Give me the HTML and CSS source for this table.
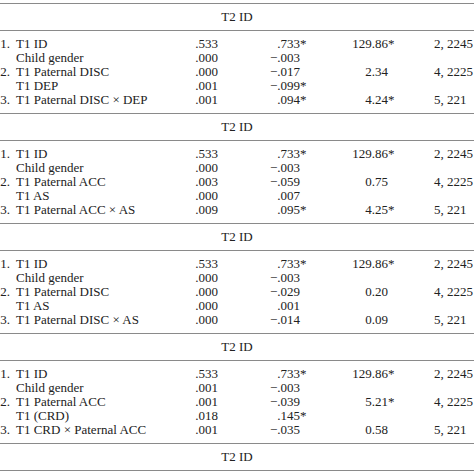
FILE: index.html
```html
<!DOCTYPE html>
<html>
<head>
<meta charset="utf-8">
<link rel="stylesheet" href="styles.css">
</head>
<body>
<div class="table">
  <section class="block">
    <div class="head">T2 ID</div>
    <div class="body">
      <div class="row"><span class="n">1.</span><span class="lab">T1 ID</span><span class="c2">.533</span><span class="c3">.733<i>*</i></span><span class="c4">129.86<i>*</i></span><span class="c5">2, 2245</span></div>
      <div class="row"><span class="n"></span><span class="lab">Child gender</span><span class="c2">.000</span><span class="c3">−.003<i></i></span><span class="c4"></span><span class="c5"></span></div>
      <div class="row"><span class="n">2.</span><span class="lab">T1 Paternal DISC</span><span class="c2">.000</span><span class="c3">−.017<i></i></span><span class="c4">2.34<i></i></span><span class="c5">4, 2225</span></div>
      <div class="row"><span class="n"></span><span class="lab">T1 DEP</span><span class="c2">.001</span><span class="c3">−.099<i>*</i></span><span class="c4"></span><span class="c5"></span></div>
      <div class="row"><span class="n">3.</span><span class="lab">T1 Paternal DISC × DEP</span><span class="c2">.001</span><span class="c3">.094<i>*</i></span><span class="c4">4.24<i>*</i></span><span class="c5">5, 221</span></div>
    </div>
  </section>
  <section class="block">
    <div class="head">T2 ID</div>
    <div class="body">
      <div class="row"><span class="n">1.</span><span class="lab">T1 ID</span><span class="c2">.533</span><span class="c3">.733<i>*</i></span><span class="c4">129.86<i>*</i></span><span class="c5">2, 2245</span></div>
      <div class="row"><span class="n"></span><span class="lab">Child gender</span><span class="c2">.000</span><span class="c3">−.003<i></i></span><span class="c4"></span><span class="c5"></span></div>
      <div class="row"><span class="n">2.</span><span class="lab">T1 Paternal ACC</span><span class="c2">.003</span><span class="c3">−.059<i></i></span><span class="c4">0.75<i></i></span><span class="c5">4, 2225</span></div>
      <div class="row"><span class="n"></span><span class="lab">T1 AS</span><span class="c2">.000</span><span class="c3">.007<i></i></span><span class="c4"></span><span class="c5"></span></div>
      <div class="row"><span class="n">3.</span><span class="lab">T1 Paternal ACC × AS</span><span class="c2">.009</span><span class="c3">.095<i>*</i></span><span class="c4">4.25<i>*</i></span><span class="c5">5, 221</span></div>
    </div>
  </section>
  <section class="block">
    <div class="head">T2 ID</div>
    <div class="body">
      <div class="row"><span class="n">1.</span><span class="lab">T1 ID</span><span class="c2">.533</span><span class="c3">.733<i>*</i></span><span class="c4">129.86<i>*</i></span><span class="c5">2, 2245</span></div>
      <div class="row"><span class="n"></span><span class="lab">Child gender</span><span class="c2">.000</span><span class="c3">−.003<i></i></span><span class="c4"></span><span class="c5"></span></div>
      <div class="row"><span class="n">2.</span><span class="lab">T1 Paternal DISC</span><span class="c2">.000</span><span class="c3">−.029<i></i></span><span class="c4">0.20<i></i></span><span class="c5">4, 2225</span></div>
      <div class="row"><span class="n"></span><span class="lab">T1 AS</span><span class="c2">.000</span><span class="c3">.001<i></i></span><span class="c4"></span><span class="c5"></span></div>
      <div class="row"><span class="n">3.</span><span class="lab">T1 Paternal DISC × AS</span><span class="c2">.000</span><span class="c3">−.014<i></i></span><span class="c4">0.09<i></i></span><span class="c5">5, 221</span></div>
    </div>
  </section>
  <section class="block">
    <div class="head">T2 ID</div>
    <div class="body">
      <div class="row"><span class="n">1.</span><span class="lab">T1 ID</span><span class="c2">.533</span><span class="c3">.733<i>*</i></span><span class="c4">129.86<i>*</i></span><span class="c5">2, 2245</span></div>
      <div class="row"><span class="n"></span><span class="lab">Child gender</span><span class="c2">.001</span><span class="c3">−.003<i></i></span><span class="c4"></span><span class="c5"></span></div>
      <div class="row"><span class="n">2.</span><span class="lab">T1 Paternal ACC</span><span class="c2">.001</span><span class="c3">−.039<i></i></span><span class="c4">5.21<i>*</i></span><span class="c5">4, 2225</span></div>
      <div class="row"><span class="n"></span><span class="lab">T1 (CRD)</span><span class="c2">.018</span><span class="c3">.145<i>*</i></span><span class="c4"></span><span class="c5"></span></div>
      <div class="row"><span class="n">3.</span><span class="lab">T1 CRD × Paternal ACC</span><span class="c2">.001</span><span class="c3">−.035<i></i></span><span class="c4">0.58<i></i></span><span class="c5">5, 221</span></div>
    </div>
  </section>
  <section class="block last">
    <div class="head">T2 ID</div>
  </section>
</div>
</body>
</html>
```
FILE: styles.css
```css
html, body {
  margin: 0;
  padding: 0;
  background: #ffffff;
}
body {
  width: 474px;
  height: 474px;
  overflow: hidden;
  font-family: "Liberation Serif", "Times New Roman", serif;
  font-size: 13px;
  color: #222222;
}
.table {
  padding-top: 3px;
}
.block {
  border-top: 1px solid #8a8a8a;
}
.head {
  height: 26px;
  line-height: 26px;
  text-align: center;
  border-bottom: 1px solid #8a8a8a;
}
.body {
  padding: 6px 0 6px 0;
}
.row {
  display: grid;
  grid-template-columns: 16px 164px 38px 89px 88px 1fr;
  height: 14px;
  line-height: 14px;
  white-space: nowrap;
}
.n {
  text-align: right;
  padding-right: 6px;
}
.c2, .c3, .c4 {
  text-align: right;
}
.c3 i, .c4 i {
  font-style: normal;
  display: inline-block;
  width: 7px;
  text-align: left;
}
.c5 {
  padding-left: 39px;
  overflow: hidden;
}
```
